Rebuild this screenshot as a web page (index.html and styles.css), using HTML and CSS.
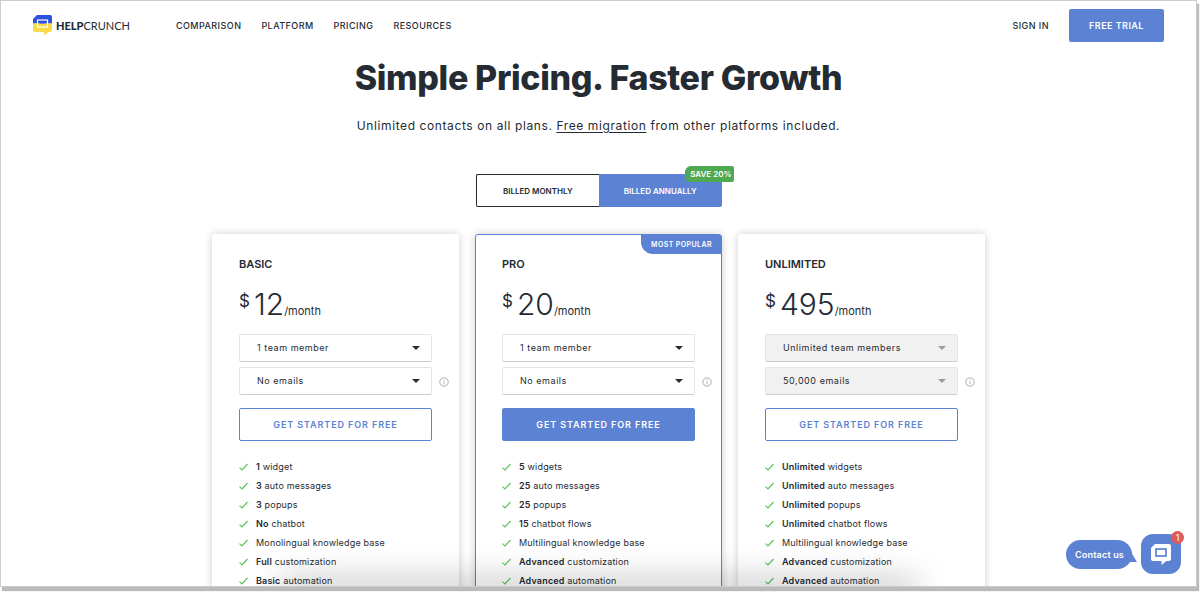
FILE: index.html
```html
<!DOCTYPE html>
<html lang="en">
<head>
  <meta charset="UTF-8">
  <title>Pricing | HelpCrunch</title>
  <meta name="viewport" content="width=device-width, initial-scale=1.0">
  <link rel="stylesheet" href="styles.css">
</head>
<body>

<!-- shared icons -->
<svg class="sprite" aria-hidden="true">
  <symbol id="check" viewBox="0 0 9 8">
    <path d="M.5 4.6 3 7 8.5 1" fill="none" stroke="#5cc45c" stroke-width="1.2"/>
  </symbol>
  <symbol id="info" viewBox="0 0 10 10">
    <circle cx="5" cy="5" r="4.2" fill="none" stroke="#999" stroke-width=".8"/>
    <path d="M5 4.4v3M5 2.5v1" stroke="#999" stroke-width=".8"/>
  </symbol>
</svg>

<div class="window">
  <header class="header">
    <a href="/" class="logo">
      <svg width="19" height="20" viewBox="0 0 19 20" aria-hidden="true">
        <path d="M0 8.500V4L4 0h13a2 2 0 0 1 2 2v6.500z" fill="#2c50e0"/>
        <path d="M0 8.500h19V15a2 2 0 0 1-2 2h-1.500L11 20.500V17H2a2 2 0 0 1-2-2z" fill="#f9da49"/>
        <rect x="4.500" y="5" width="10" height="7" fill="none" stroke="#fff" stroke-width="1.200"/>
        <rect x="6.500" y="7" width="6" height="1.500" fill="#2c50e0"/>
      </svg>
      <span class="logo-text"><b>HELP</b>CRUNCH</span>
    </a>
    <nav class="nav">
      <a href="/comparison">COMPARISON</a>
      <a href="/platform">PLATFORM</a>
      <a href="/pricing">PRICING</a>
      <a href="/resources">RESOURCES</a>
    </nav>
    <a href="/login" class="sign-in">SIGN IN</a>
    <button type="button" class="trial">FREE TRIAL</button>
  </header>

  <main>
    <h1>Simple Pricing. Faster Growth</h1>
    <p class="lead">Unlimited contacts on all plans. <a href="/migration">Free migration</a> from other platforms included.</p>

    <div class="billing">
      <button type="button">BILLED MONTHLY</button>
      <button type="button" class="active">BILLED ANNUALLY</button>
      <span class="save">SAVE 20%</span>
    </div>

    <div class="plans">
      <section class="plan">
        <h2>BASIC</h2>
        <div class="price"><span class="currency">$</span><span class="amount">12</span><span class="period">/month</span></div>
        <div class="field">
          <select aria-label="Team members"><option>1 team member</option></select>
        </div>
        <div class="field">
          <select aria-label="Emails"><option>No emails</option></select>
          <svg class="info" width="10" height="10"><use href="#info"/></svg>
        </div>
        <button type="button" class="start">GET STARTED FOR FREE</button>
        <ul>
          <li><svg width="9" height="8"><use href="#check"/></svg><span><b>1</b> widget</span></li>
          <li><svg width="9" height="8"><use href="#check"/></svg><span><b>3</b> auto messages</span></li>
          <li><svg width="9" height="8"><use href="#check"/></svg><span><b>3</b> popups</span></li>
          <li><svg width="9" height="8"><use href="#check"/></svg><span><b>No</b> chatbot</span></li>
          <li><svg width="9" height="8"><use href="#check"/></svg><span>Monolingual knowledge base</span></li>
          <li><svg width="9" height="8"><use href="#check"/></svg><span><b>Full</b> customization</span></li>
          <li><svg width="9" height="8"><use href="#check"/></svg><span><b>Basic</b> automation</span></li>
        </ul>
      </section>

      <section class="plan popular">
        <span class="ribbon">MOST POPULAR</span>
        <h2>PRO</h2>
        <div class="price"><span class="currency">$</span><span class="amount">20</span><span class="period">/month</span></div>
        <div class="field">
          <select aria-label="Team members"><option>1 team member</option></select>
        </div>
        <div class="field">
          <select aria-label="Emails"><option>No emails</option></select>
          <svg class="info" width="10" height="10"><use href="#info"/></svg>
        </div>
        <button type="button" class="start">GET STARTED FOR FREE</button>
        <ul>
          <li><svg width="9" height="8"><use href="#check"/></svg><span><b>5</b> widgets</span></li>
          <li><svg width="9" height="8"><use href="#check"/></svg><span><b>25</b> auto messages</span></li>
          <li><svg width="9" height="8"><use href="#check"/></svg><span><b>25</b> popups</span></li>
          <li><svg width="9" height="8"><use href="#check"/></svg><span><b>15</b> chatbot flows</span></li>
          <li><svg width="9" height="8"><use href="#check"/></svg><span>Multilingual knowledge base</span></li>
          <li><svg width="9" height="8"><use href="#check"/></svg><span><b>Advanced</b> customization</span></li>
          <li><svg width="9" height="8"><use href="#check"/></svg><span><b>Advanced</b> automation</span></li>
        </ul>
      </section>

      <section class="plan">
        <h2>UNLIMITED</h2>
        <div class="price"><span class="currency">$</span><span class="amount">495</span><span class="period">/month</span></div>
        <div class="field">
          <select aria-label="Team members" disabled><option>Unlimited team members</option></select>
        </div>
        <div class="field">
          <select aria-label="Emails" disabled><option>50,000 emails</option></select>
          <svg class="info" width="10" height="10"><use href="#info"/></svg>
        </div>
        <button type="button" class="start">GET STARTED FOR FREE</button>
        <ul>
          <li><svg width="9" height="8"><use href="#check"/></svg><span><b>Unlimited</b> widgets</span></li>
          <li><svg width="9" height="8"><use href="#check"/></svg><span><b>Unlimited</b> auto messages</span></li>
          <li><svg width="9" height="8"><use href="#check"/></svg><span><b>Unlimited</b> popups</span></li>
          <li><svg width="9" height="8"><use href="#check"/></svg><span><b>Unlimited</b> chatbot flows</span></li>
          <li><svg width="9" height="8"><use href="#check"/></svg><span>Multilingual knowledge base</span></li>
          <li><svg width="9" height="8"><use href="#check"/></svg><span><b>Advanced</b> customization</span></li>
          <li><svg width="9" height="8"><use href="#check"/></svg><span><b>Advanced</b> automation</span></li>
        </ul>
      </section>
    </div>
  </main>

  <div class="chat">
    <span class="chat-label">Contact us
      <svg class="tail" width="9" height="15" viewBox="0 0 9 15" aria-hidden="true"><path d="M0 0c3 4 5 9 9 15H0z" fill="#5b82d3"/></svg>
    </span>
    <button type="button" class="chat-button" aria-label="Open chat">
      <svg width="20" height="21" viewBox="0 0 20 21" aria-hidden="true">
        <path d="M4 0h14a2 2 0 0 1 2 2v13a2 2 0 0 1-2 2h-2.500L10.500 21v-4H2a2 2 0 0 1-2-2V4z" fill="#fff"/>
        <rect x="5" y="5" width="10" height="7" fill="none" stroke="#5b82d3" stroke-width="1.700"/>
      </svg>
      <span class="badge">1</span>
    </button>
  </div>
</div>

</body>
</html>
```
FILE: styles.css
```css
* {
  margin: 0;
  padding: 0;
  box-sizing: border-box;
}

body {
  font-family: Inter, 'Liberation Sans', sans-serif;
  height: 100vh;
  padding: 0 3px 6px 0;
  overflow: hidden;
  background-color: #fff;
  color: #252b33;
}

a {
  color: inherit;
  text-decoration: none;
}

button,
select {
  font-family: inherit;
  color: inherit;
}

button {
  cursor: pointer;
}

.sprite {
  display: none;
}

.window {
  position: relative;
  height: 100%;
  overflow: hidden;
  border: 1px solid #ccc;
  box-shadow: 2px 4px 1px #bbb;
  background-color: #fff;
}

/* soft shade along the bottom edge */
.window::after {
  content: "";
  position: absolute;
  left: 24%;
  right: 24%;
  bottom: -8px;
  height: 8px;
  box-shadow: 0 0 32px 8px rgba(0, 0, 0, 0.22);
  pointer-events: none;
}

/* header */
.header {
  display: flex;
  align-items: center;
  height: 48px;
  padding: 0 32px;
  font-size: 9px;
  font-weight: 500;
  letter-spacing: 0.05em;
}

.logo {
  display: flex;
  align-items: center;
  gap: 4px;
  margin-right: 46px;
}

.logo-text {
  font-family: Lato, sans-serif;
  font-size: 11px;
  font-weight: 400;
  letter-spacing: 0;
}

.logo-text b {
  font-weight: 900;
}

.nav {
  display: flex;
  flex: 1;
  gap: 20px;
}

.sign-in {
  margin-right: 20px;
}

.trial {
  width: 95px;
  height: 33px;
  border: none;
  border-radius: 2px;
  background-color: #5b82d3;
  color: #fff;
  font-size: 9px;
  font-weight: 600;
  letter-spacing: 0.05em;
}

/* intro */
h1 {
  margin-top: 8px;
  font-size: 34px;
  font-weight: 800;
  line-height: 42px;
  letter-spacing: -0.01em;
  text-align: center;
}

.lead {
  margin-top: 18px;
  font-size: 12px;
  line-height: 18px;
  letter-spacing: 0.05em;
  text-align: center;
}

.lead a {
  text-decoration: underline;
  text-underline-offset: 2px;
}

.billing {
  position: relative;
  display: flex;
  width: 246px;
  margin: 39px auto 27px;
}

.billing button {
  flex: 1;
  height: 33px;
  border: 1px solid #252b33;
  border-right: none;
  border-radius: 2px 0 0 2px;
  background-color: #fff;
  font-size: 8px;
  font-weight: 600;
}

.billing .active {
  border: none;
  border-radius: 0 2px 2px 0;
  background-color: #5b82d3;
  color: #fff;
}

.save {
  position: absolute;
  top: -8px;
  right: -12px;
  padding: 0 2px 0 5px;
  border-radius: 6px 2px 2px 5px;
  background-color: #4fa951;
  color: #fff;
  font-size: 8px;
  font-weight: 600;
  line-height: 16px;
}

/* plans */
.plans {
  display: grid;
  grid-template-columns: repeat(3, 1fr);
  gap: 16px;
  max-width: 773px;
  margin: 0 auto;
}

.plan {
  position: relative;
  padding: 21px 26px 24px;
  border: 1px solid transparent;
  border-radius: 3px;
  background-color: #fff;
  box-shadow: 0 0 8px rgba(0, 0, 0, 0.2);
}

.popular {
  border-color: #5b82d3;
}

.ribbon {
  position: absolute;
  top: 0;
  right: 0;
  padding: 0 9px 0 10px;
  border-radius: 0 0 0 12px;
  background-color: #5b82d3;
  color: #fff;
  font-size: 7px;
  font-weight: 600;
  line-height: 19px;
  letter-spacing: 0.06em;
}

.plan h2 {
  font-size: 11px;
  font-weight: 600;
  line-height: 16px;
}

.price {
  display: flex;
  align-items: baseline;
  height: 36px;
  margin: 14px 0 12px;
}

.currency {
  align-self: flex-start;
  margin-right: 4px;
  font-size: 17px;
  line-height: 30px;
}

.amount {
  font-size: 30px;
  font-weight: 300;
  line-height: 36px;
}

.period {
  font-size: 11px;
}

.field {
  position: relative;
  margin-bottom: 5px;
}

.field select {
  display: block;
  width: 100%;
  height: 28px;
  padding: 0 17px 2px;
  border: 1px solid #e4e4e4;
  border-bottom-color: #ccc;
  border-radius: 2px;
  background-color: #fff;
  font-size: 9px;
  letter-spacing: 0.06em;
  appearance: none;
}

.field::after {
  content: "";
  position: absolute;
  top: 12px;
  right: 12px;
  border: 4px solid transparent;
  border-top-color: #252b33;
  border-bottom: none;
  pointer-events: none;
}

.field select:disabled {
  background-color: #f1f1f1;
  opacity: 1;
}

.field:has(select:disabled)::after {
  border-top-color: #999;
}

.info {
  position: absolute;
  top: 10px;
  right: -17px;
}

.start {
  width: 100%;
  height: 33px;
  margin: 8px 0 16px;
  border: 1px solid #5b82d3;
  border-radius: 2px;
  background-color: #fff;
  color: #5b82d3;
  font-size: 9px;
  font-weight: 600;
  letter-spacing: 0.1em;
}

.popular .start {
  background-color: #5b82d3;
  color: #fff;
}

.plan ul {
  list-style: none;
}

.plan li {
  display: flex;
  align-items: center;
  gap: 8px;
  font-size: 9px;
  line-height: 19px;
  letter-spacing: 0.02em;
}

.plan b {
  font-weight: 600;
}

/* chat widget */
.chat {
  position: absolute;
  right: 15px;
  bottom: 12px;
  z-index: 1;
  display: flex;
  align-items: center;
  gap: 9px;
}

.chat-label {
  position: relative;
  padding: 0 8px 0 9px;
  border-radius: 15px;
  background-color: #5b82d3;
  color: #fff;
  font-size: 9px;
  font-weight: 600;
  line-height: 29px;
  letter-spacing: 0.02em;
}

.tail {
  position: absolute;
  right: -5px;
  bottom: 7px;
}

.chat-button {
  position: relative;
  display: grid;
  place-items: center;
  width: 40px;
  height: 40px;
  border: none;
  border-radius: 12px;
  background-color: #5b82d3;
}

.badge {
  position: absolute;
  top: -3px;
  right: -3px;
  width: 13px;
  border-radius: 50%;
  background-color: #dd5b5b;
  color: #fff;
  font-size: 9px;
  line-height: 13px;
}
```
